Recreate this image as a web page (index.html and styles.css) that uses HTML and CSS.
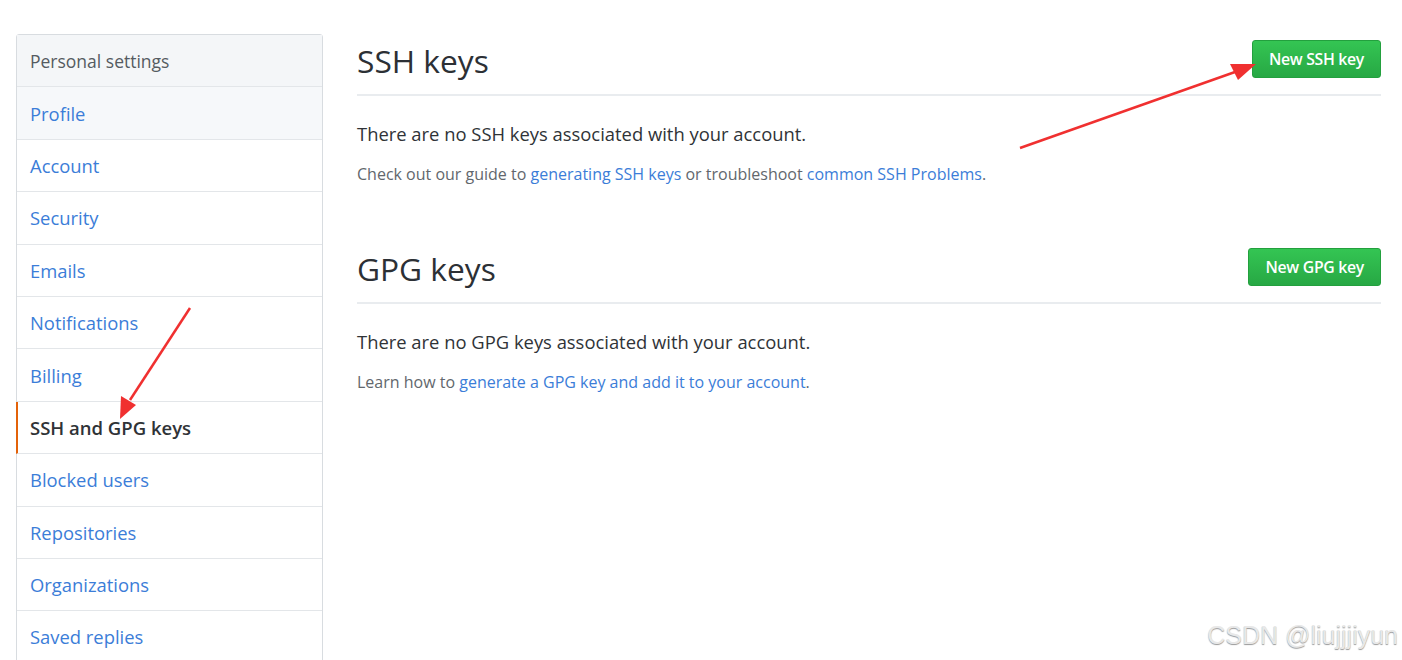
FILE: index.html
```html
<!DOCTYPE html>
<html>
<head>
<meta charset="utf-8">
<link rel="stylesheet" href="styles.css">
</head>
<body>
<div class="page">
  <nav class="menu">
    <div class="menu-heading">Personal settings</div>
    <a class="menu-item hover">Profile</a>
    <a class="menu-item">Account</a>
    <a class="menu-item">Security</a>
    <a class="menu-item">Emails</a>
    <a class="menu-item">Notifications</a>
    <a class="menu-item">Billing</a>
    <a class="menu-item selected">SSH and GPG keys</a>
    <a class="menu-item">Blocked users</a>
    <a class="menu-item">Repositories</a>
    <a class="menu-item">Organizations</a>
    <a class="menu-item">Saved replies</a>
  </nav>
  <main class="content">
    <section class="keys">
      <div class="subhead">
        <h2>SSH keys</h2>
        <button class="btn">New SSH key</button>
      </div>
      <p class="empty">There are no SSH keys associated with your account.</p>
      <p class="note">Check out our guide to <a>generating SSH keys</a> or troubleshoot <a>common SSH Problems</a>.</p>
    </section>
    <section class="keys">
      <div class="subhead">
        <h2>GPG keys</h2>
        <button class="btn">New GPG key</button>
      </div>
      <p class="empty">There are no GPG keys associated with your account.</p>
      <p class="note">Learn how to <a>generate a GPG key and add it to your account</a>.</p>
    </section>
  </main>
</div>
<svg class="arrows" width="1402" height="660" viewBox="0 0 1402 660">
  <line x1="1020" y1="148" x2="1235" y2="72" stroke="#f03030" stroke-width="2.5"/>
  <polygon points="1256,64 1230,64 1238,80" fill="#f03030"/>
  <line x1="190" y1="308" x2="130" y2="400" stroke="#f03030" stroke-width="2.5"/>
  <polygon points="120,419 121,396 136,405" fill="#f03030"/>
</svg>
<div class="watermark">CSDN @liujjjiyun</div>
</body>
</html>
```
FILE: styles.css
```css
html, body {
  margin: 0;
  background: #fff;
  font-family: "Open Sans", "Noto Sans", sans-serif;
  color: #24292e;
}
.page {
  display: flex;
  gap: 34px;
  padding: 34px 21px 0 16px;
  height: 626px;
  overflow: hidden;
}
.menu {
  width: 305px;
  flex: none;
  border: 1px solid #d8dce0;
  border-radius: 3px 3px 0 0;
  display: flex;
  flex-direction: column;
  align-self: flex-start;
}
.menu-heading, .menu-item {
  height: 51.4px;
  box-sizing: content-box;
  display: flex;
  align-items: center;
  padding-left: 13px;
  border-bottom: 1px solid #e3e6e9;
  font-size: 18.4px;
  flex: none;
}
.menu-heading {
  background: #f4f6f8;
  color: #555b61;
  font-size: 17.5px;
}
.menu-item {
  color: #3b7dd8;
}
.menu-item.hover {
  background: #f6f8fa;
}
.menu-item.selected {
  color: #2f3337;
  font-weight: 600;
  font-size: 18.5px;
  padding-left: 12px;
  border-left: 2px solid #e36209;
  margin-left: -1px;
}
.content {
  flex: 1;
  display: flex;
  flex-direction: column;
  gap: 57px;
}
.subhead {
  display: flex;
  justify-content: space-between;
  align-items: flex-start;
  border-bottom: 2px solid #e9ecef;
  height: 60px;
}
.subhead h2 {
  margin: 5px 0 0;
  font-weight: 400;
  font-size: 31.7px;
  line-height: 43px;
  color: #2c3035;
}
.btn {
  margin-top: 6px;
  height: 38px;
  padding: 0 16px;
  border: 1px solid #23a03e;
  border-radius: 3px;
  background: linear-gradient(#34c553, #27a844);
  color: #fff;
  font-family: inherit;
  font-weight: 600;
  font-size: 15.8px;
  letter-spacing: -0.3px;
}
.empty {
  margin: 26px 0 0;
  font-size: 18.4px;
  line-height: 24px;
  color: #2f3337;
}
.note {
  margin: 17px 0 0;
  font-size: 16px;
  line-height: 22px;
  color: #62676d;
}
.note a {
  color: #3b7dd8;
}
.arrows {
  position: absolute;
  left: 0;
  top: 0;
  pointer-events: none;
}
.watermark {
  position: absolute;
  right: 4px;
  bottom: 10px;
  font-family: "Liberation Sans", Arial, sans-serif;
  font-size: 25px;
  color: #e8e8e8;
  text-shadow: 0 1px 1px #9a9a9a;
}
```
